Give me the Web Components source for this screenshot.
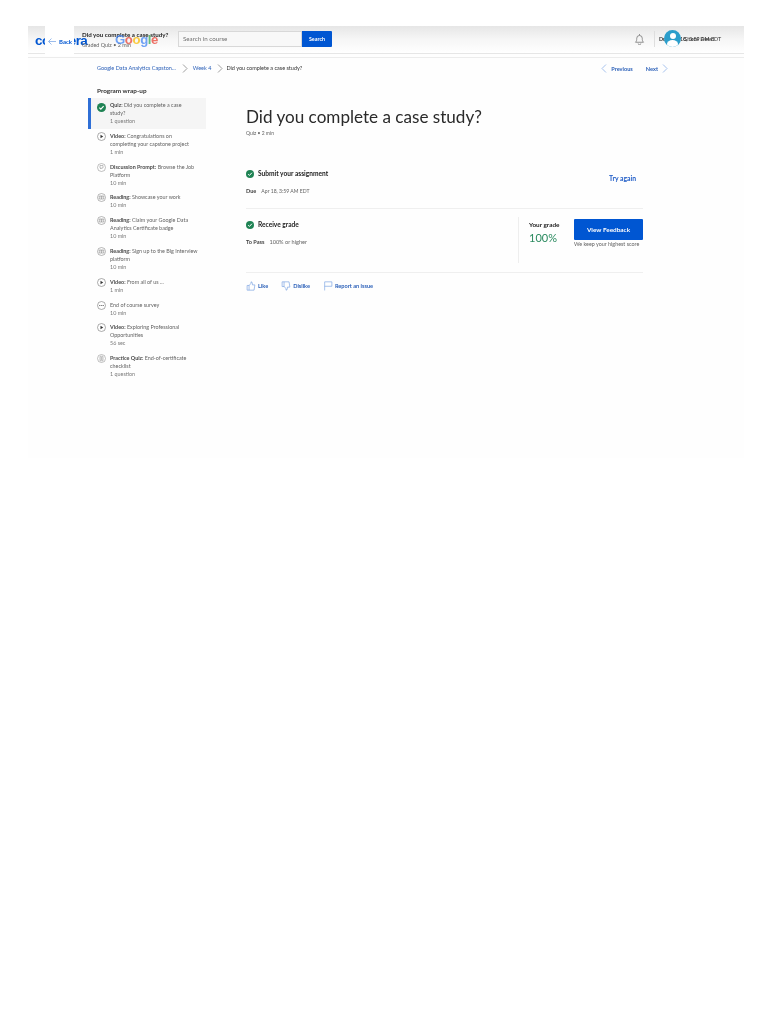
<!DOCTYPE html>
<html>
<head>
<meta charset="utf-8">
<title>Did you complete a case study?</title>
<style>
  html, body { margin: 0; padding: 0; background: #fff; }
  body { font-family: Lato, "Noto Sans", sans-serif; color: #1f1f1f; }
</style>
</head>
<body>
<course-page>
  <top-bar slot="top"></top-bar>
  <crumb-bar slot="crumbs"></crumb-bar>
  <side-nav slot="side" heading="Program wrap-up">
    <side-item kind="done" label="Quiz:" text="Did you complete a case|study?" meta="1 question" active></side-item>
    <side-item kind="video" label="Video:" text="Congratulations on|completing your capstone project" meta="1 min"></side-item>
    <side-item kind="discuss" label="Discussion Prompt:" text="Browse the Job|Platform" meta="10 min"></side-item>
    <side-item kind="read" label="Reading:" text="Showcase your work" meta="10 min"></side-item>
    <side-item kind="read" label="Reading:" text="Claim your Google Data|Analytics Certificate badge" meta="10 min"></side-item>
    <side-item kind="read" label="Reading:" text="Sign up to the Big Interview|platform" meta="10 min"></side-item>
    <side-item kind="video" label="Video:" text="From all of us ..." meta="1 min"></side-item>
    <side-item kind="survey" label="" text="End of course survey" meta="10 min"></side-item>
    <side-item kind="video" label="Video:" text="Exploring Professional|Opportunities" meta="56 sec"></side-item>
    <side-item kind="practice" label="Practice Quiz:" text="End-of-certificate|checklist" meta="1 question"></side-item>
  </side-nav>
  <quiz-main slot="main"></quiz-main>
</course-page>

<script>
const checkIcon = (size) => `<svg width="${size}" height="${size}" viewBox="0 0 16 16"><circle cx="8" cy="8" r="8" fill="#1f8354"/><path d="M4.2 8.3l2.6 2.6 5-5.400" fill="none" stroke="#fff" stroke-width="2"/></svg>`;

class CoursePage extends HTMLElement {
  constructor() {
    super();
    this.attachShadow({ mode: "open" });
    this.shadowRoot.innerHTML = `
      <style>
        :host { display: block; width: 768px; height: 1024px; box-sizing: border-box; padding: 26px 24px 0 28px; }
        .frame { height: 432px; background: #fefefe; filter: blur(.4px); }
        .body { display: flex; padding-left: 60px; }
      </style>
      <div class="frame">
        <slot name="top"></slot>
        <slot name="crumbs"></slot>
        <div class="body">
          <slot name="side"></slot>
          <slot name="main"></slot>
        </div>
      </div>`;
  }
}

class TopBar extends HTMLElement {
  constructor() {
    super();
    this.attachShadow({ mode: "open" });
    this.shadowRoot.innerHTML = `
      <style>
        :host { display: block; }
        .bar { position: relative; display: flex; align-items: center; height: 26px; padding: 0 0 1px 7px; border-bottom: 1px solid #e6e6e6;
               background: linear-gradient(#e6e6e6, #f6f6f6 50%, #fff); }
        .logo { width: 47px; font: 700 13.500px "Liberation Sans", sans-serif; letter-spacing: -.6px; color: #0056d2; position: relative; top: 1px; }
        .title { width: 96px; display: flex; flex-direction: column; gap: 3px; position: relative; top: 1px; }
        .title b { font-size: 6.200px; font-weight: 700; color: #1f1f1f; line-height: 8px; white-space: nowrap; }
        .title span { font-size: 5.400px; color: #636363; line-height: 7px; white-space: nowrap; }
        .search { display: flex; height: 16px; }
        .search .field { width: 118px; border: 1px solid #d8d8d8; background: #f8f8f8; padding-left: 4px; font-size: 6.200px; line-height: 14px; color: #707070; }
        .search .go { width: 30px; background: #0056d2; color: #fff; font-size: 5.400px; font-weight: 700; text-align: center; line-height: 16px; border-radius: 0 1px 1px 0; }
        .right { margin-left: auto; display: flex; align-items: center; width: 110px; }
        .div { width: 1px; height: 16px; background: #dedede; margin-left: 9px; }
        .back { position: absolute; left: 17px; top: 0; width: 29px; height: 30px; background: #fff; display: flex; align-items: center; gap: 3px; box-sizing: border-box; padding: 0 0 0 3px; color: #0056d2; font-size: 6px; font-weight: 700; }
        .google { position: absolute; left: 87px; top: 6px; font: 700 13.200px "Liberation Sans", sans-serif; letter-spacing: -.4px; opacity: .75; }
        .due { position: absolute; left: 631px; top: 10px; font-size: 5.400px; color: #333; white-space: nowrap; }
        .avatar { position: absolute; left: 636px; top: 4px; width: 17px; height: 17px; border-radius: 50%; background: #2b9ecb; overflow: hidden; }
        .avatar::before { content: ""; position: absolute; left: 5.500px; top: 3px; width: 6px; height: 6px; border-radius: 50%; background: #fff; }
        .avatar::after { content: ""; position: absolute; left: 3px; top: 10px; width: 11px; height: 8px; border-radius: 50%; background: #fff; }
        .name { position: absolute; left: 655px; top: 9px; font-size: 6px; color: #333; white-space: nowrap; }
      </style>
      <div class="bar">
        <span class="logo">coursera</span>
        <div class="title"><b>Did you complete a case study?</b><span>Graded Quiz • 2 min</span></div>
        <div class="search"><div class="field">Search in course</div><div class="go">Search</div></div>
        <div class="right">
          <svg width="11" height="12" viewBox="0 0 22 24" fill="none" stroke="#777" stroke-width="1.600"><path d="M3 18.500c2-2 2.500-4 2.500-8a5.500 5.500 0 0 1 11 0c0 4 .5 6 2.500 8z"/><path d="M8.500 21a2.500 2.500 0 0 0 5 0M11 2v2.500"/></svg>
          <span class="div"></span>
        </div>
        <div class="back">
          <svg width="8" height="7" viewBox="0 0 16 14" fill="none" stroke="#7aa5e6" stroke-width="1.500"><path d="M16 7H1.500M7 1L1 7l6 6"/></svg>
          <span>Back</span>
        </div>
        <div class="google"><span style="color:#4285f4">G</span><span style="color:#ea4335">o</span><span style="color:#fbbc05">o</span><span style="color:#4285f4">g</span><span style="color:#34a853">l</span><span style="color:#ea4335">e</span></div>
        <div class="due"><b>Due</b> Apr 18, 3:59 AM EDT</div>
        <div class="avatar"></div>
        <div class="name">Gheni Dewi</div>
      </div>`;
  }
}

class CrumbBar extends HTMLElement {
  constructor() {
    super();
    this.attachShadow({ mode: "open" });
    const chev = (dir, c) => `<svg width="6" height="9" viewBox="0 0 6 9" fill="none" stroke="${c}" stroke-width=".8"><path d="${dir === "l" ? "M5 .5L1 4.500l4 4" : "M1 .5l4 4-4 4"}"/></svg>`;
    this.shadowRoot.innerHTML = `
      <style>
        :host { display: block; }
        .row { display: flex; align-items: center; height: 24px; margin-top: 3px; padding: 0 76px 3px 69px; border-top: 1px solid #ececec; font-size: 5.500px; white-space: nowrap; box-sizing: border-box; }
        a { color: #2a5fb8; }
        .cur { color: #333; }
        .sep { margin: 0 5px 0 6px; display: flex; }
        .sep.b { margin: 0 3px 0 6px; }
        .pager { margin-left: auto; display: flex; align-items: center; gap: 4px; font-weight: 700; font-size: 5.600px; color: #2a5fb8; }
        .pager .n { margin-left: 9px; }
      </style>
      <div class="row">
        <a>Google Data Analytics Capston...</a><span class="sep">${chev("r", "#888")}</span>
        <a>Week 4</a><span class="sep b">${chev("r", "#888")}</span>
        <span class="cur">Did you complete a case study?</span>
        <div class="pager">${chev("l", "#8fb2ea")}<span>Previous</span><span class="n">Next</span>${chev("r", "#8fb2ea")}</div>
      </div>`;
  }
}

class SideNav extends HTMLElement {
  constructor() {
    super();
    this.attachShadow({ mode: "open" });
    this.shadowRoot.innerHTML = `
      <style>
        :host { display: block; width: 158px; flex: none; }
        h2 { margin: 0; padding: 5px 0 3px 9px; font-size: 6.400px; line-height: 9px; font-weight: 700; color: #333; }
      </style>
      <h2>${this.getAttribute("heading")}</h2>
      <slot></slot>`;
  }
}

const SIDE_ICONS = {
  done: checkIcon(9),
  video: `<svg width="9" height="9" viewBox="0 0 18 18"><circle cx="9" cy="9" r="8" fill="none" stroke="#777" stroke-width="1.200"/><path d="M7 5.500l5.500 3.500L7 12.500z" fill="#333"/></svg>`,
  discuss: `<svg width="9" height="9" viewBox="0 0 18 18" fill="none" stroke="#999" stroke-width="1.200"><circle cx="9" cy="9" r="8"/><path d="M6 5h6v5H9l-1.500 2v-2H6z"/></svg>`,
  read: `<svg width="9" height="9" viewBox="0 0 18 18" fill="none" stroke="#888" stroke-width="1.200"><circle cx="9" cy="9" r="8"/><path d="M4.500 6h9v6h-9zM9 6v6M6 8h1.500M10.500 8H12"/></svg>`,
  survey: `<svg width="9" height="9" viewBox="0 0 18 18" fill="none" stroke="#777" stroke-width="1.200"><circle cx="9" cy="9" r="8"/><path d="M4 9h2.500M7.500 9H10M11 9h3" stroke-width="1.800"/></svg>`,
  practice: `<svg width="9" height="9" viewBox="0 0 18 18" fill="none" stroke="#999" stroke-width="1.200"><circle cx="9" cy="9" r="8"/><path d="M6 4.500h6v9H6zM7.500 7h3M7.500 9h3M7.500 11h3"/></svg>`
};

class SideItem extends HTMLElement {
  constructor() {
    super();
    this.attachShadow({ mode: "open" });
    const label = this.getAttribute("label");
    const text = this.getAttribute("text").split("|").join("<br>");
    this.shadowRoot.innerHTML = `
      <style>
        :host { display: block; width: 118px; }
        .item { display: flex; gap: 4px; padding: 3px 3px 3.800px 9px; box-sizing: border-box; font-size: 5.400px; line-height: 8px; color: #636363; white-space: nowrap; }
        :host([active]) .item { background: #f5f5f5; box-shadow: inset 3px 0 0 #2f6fd6; }
        :host([active]) .ico { margin-top: 2px; }
        .ico { flex: none; width: 9px; height: 9px; display: flex; }
        b { color: #4a4a4a; font-weight: 700; }
        .meta { color: #7a7a7a; }
      </style>
      <div class="item">
        <span class="ico">${SIDE_ICONS[this.getAttribute("kind")]}</span>
        <div>
          <div>${label ? `<b>${label}</b> ` : ""}${text}</div>
          <div class="meta">${this.getAttribute("meta")}</div>
        </div>
      </div>`;
  }
}

class QuizMain extends HTMLElement {
  constructor() {
    super();
    this.attachShadow({ mode: "open" });
    const thumb = `<svg width="10" height="10" viewBox="0 0 18 18" fill="none" stroke="#6f9be0" stroke-width="1.100"><path d="M2 8h3.500v8.500H2zM5.500 8.500L9 4V1.500c1.500 0 2.500 1 2.500 2.500v3H16l-1.500 9.500h-9"/></svg>`;
    this.shadowRoot.innerHTML = `
      <style>
        :host { display: block; width: 397px; flex: none; color: #1f1f1f; }
        h1 { margin: 0; padding-top: 24px; font-size: 17.100px; line-height: 24px; font-weight: 400; color: #2a2a2a; white-space: nowrap; }
        .sub { font-size: 5px; line-height: 8px; color: #636363; }
        .step { display: flex; align-items: center; gap: 4px; font-size: 6.600px; font-weight: 700; line-height: 9px; color: #222; }
        .detail { font-size: 5.600px; line-height: 8px; color: #636363; margin-top: 9px; }
        .detail b { color: #444; margin-right: 5px; font-weight: 700; }
        .detail .date { font-size: 5.100px; }
        .submit { position: relative; padding: 32px 0 13px; border-bottom: 1px solid #efefef; }
        .try { position: absolute; left: 363px; top: 37px; font-size: 6.800px; font-weight: 700; color: #1e5bc6; white-space: nowrap; }
        .grade { display: flex; height: 64px; border-bottom: 1px solid #efefef; box-sizing: border-box; }
        .grade .info { width: 272px; padding-top: 11px; }
        .score { width: 125px; box-sizing: border-box; margin: 8px 0 9px; border-left: 1px solid #eee; padding: 3px 0 0 10px; display: flex; }
        .score .col { width: 45px; }
        .score .t { font-size: 6.400px; font-weight: 700; line-height: 9px; color: #222; }
        .score .v { font-size: 11px; line-height: 14px; color: #2a8a5f; margin-top: 2px; }
        .cta { width: 69px; margin-top: -1px; }
        .btn { height: 21px; background: #0056d2; color: #fff; border-radius: 1px; font-size: 6.400px; font-weight: 700; display: flex; align-items: center; justify-content: center; }
        .note { font-size: 5.400px; line-height: 8px; color: #636363; white-space: nowrap; }
        .acts { display: flex; align-items: center; height: 25px; font-size: 5.600px; font-weight: 700; color: #2a5fb8; }
        .acts span { display: flex; align-items: center; gap: 2px; }
        .down svg { transform: rotate(180deg) scaleX(-1); }
      </style>
      <h1>Did you complete a case study?</h1>
      <div class="sub">Quiz • 2 min</div>
      <div class="submit">
        <div class="step">${checkIcon(8)}<span>Submit your assignment</span></div>
        <div class="detail"><b>Due</b><span class="date">Apr 18, 3:59 AM EDT</span></div>
        <div class="try">Try again</div>
      </div>
      <div class="grade">
        <div class="info">
          <div class="step">${checkIcon(8)}<span>Receive grade</span></div>
          <div class="detail"><b>To Pass</b>100% or higher</div>
        </div>
        <div class="score">
          <div class="col"><div class="t">Your grade</div><div class="v">100%</div></div>
          <div class="cta"><div class="btn">View Feedback</div><div class="note">We keep your highest score</div></div>
        </div>
      </div>
      <div class="acts">
        <span>${thumb}Like</span>
        <span class="down" style="margin-left:13px">${thumb}Dislike</span>
        <span style="margin-left:13px"><svg width="10" height="10" viewBox="0 0 18 18" fill="none" stroke="#6f9be0" stroke-width="1.100"><path d="M3 17V1.500h13v8H3"/></svg>Report an issue</span>
      </div>`;
  }
}

customElements.define("course-page", CoursePage);
customElements.define("top-bar", TopBar);
customElements.define("crumb-bar", CrumbBar);
customElements.define("side-nav", SideNav);
customElements.define("side-item", SideItem);
customElements.define("quiz-main", QuizMain);
</script>
</body>
</html>
